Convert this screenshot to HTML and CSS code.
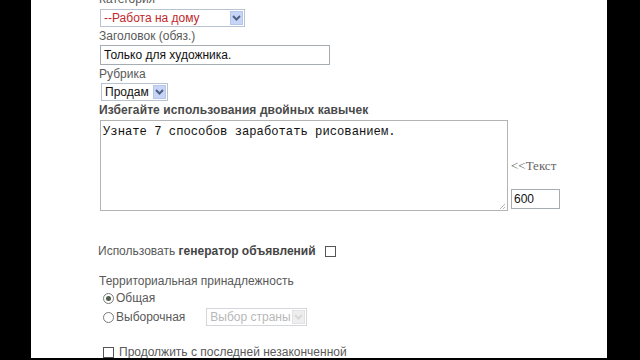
FILE: index.html
```html
<!DOCTYPE html>
<html lang="ru">
<head>
    <meta charset="UTF-8">
    <title>Подать объявление</title>
    <link rel="stylesheet" href="styles.css">
</head>
<body>
    <div class="screen">
        <div class="page">
            <form class="ad-form">
                <div class="label">Категория</div>
                <div class="select select-cat">
                    <span class="value red">--Работа на дому</span>
                    <span class="arrow"><svg width="9" height="6" viewBox="0 0 9 6"><path d="M1 1 L4.5 4.5 L8 1" fill="none" stroke="#4d6185" stroke-width="2"/></svg></span>
                </div>

                <div class="label">Заголовок (обяз.)</div>
                <div class="input input-title">Только для художника.</div>

                <div class="label">Рубрика</div>
                <div class="select select-rub">
                    <span class="value">Продам</span>
                    <span class="arrow"><svg width="9" height="6" viewBox="0 0 9 6"><path d="M1 1 L4.5 4.5 L8 1" fill="none" stroke="#4d6185" stroke-width="2"/></svg></span>
                </div>

                <div class="label bold">Избегайте использования двойных кавычек</div>
                <div class="text-row">
                    <div class="textarea">
                        Узнате 7 способов заработать рисованием.
                        <span class="grip"><svg width="8" height="8" viewBox="0 0 8 8"><path d="M7 2 L2 7 M7 5 L5 7" stroke="#b5b5b5" stroke-width="1"/></svg></span>
                    </div>
                    <div class="text-side">
                        <div class="counter-label">&lt;&lt;Текст</div>
                        <div class="input counter">600</div>
                    </div>
                </div>

                <div class="check-row generator">
                    <span>Использовать <b>генератор объявлений</b></span>
                    <span class="checkbox"></span>
                </div>

                <div class="label territory">Территориальная принадлежность</div>
                <div class="radio-row">
                    <span class="radio checked"></span>
                    <span>Общая</span>
                </div>
                <div class="radio-row">
                    <span class="radio"></span>
                    <span class="radio-text">Выборочная</span>
                    <div class="select select-country disabled">
                        <span class="value">Выбор страны</span>
                        <span class="arrow"><svg width="9" height="6" viewBox="0 0 9 6"><path d="M1 1 L4.5 4.5 L8 1" fill="none" stroke="#d8d8d8" stroke-width="2"/></svg></span>
                    </div>
                </div>

                <div class="check-row resume">
                    <span class="checkbox"></span>
                    <span>Продолжить с последней незаконченной</span>
                </div>
            </form>
        </div>
    </div>
</body>
</html>
```

FILE: styles.css
```css
body {
    margin: 0;
    background: #000;
    font-family: "Liberation Sans", Arial, sans-serif;
    font-size: 12px;
    color: #595959;
}

.screen {
    width: 640px;
    height: 360px;
    overflow: hidden;
}

.page {
    margin-left: 31px;
    width: 576px;
    height: 358px;
    background: #fff;
    overflow: hidden;
}

.ad-form {
    margin-top: -8px;
    padding-left: 67px;
}

.label {
    line-height: 14px;
    height: 14px;
    margin-left: 1px;
}

.label.bold {
    font-weight: bold;
    color: #4a4a4a;
    margin-top: 2px;
    height: 15px;
    letter-spacing: 0.1px;
}

.red {
    color: #c0282d;
}

/* fake selects */
.select {
    display: flex;
    align-items: center;
    box-sizing: border-box;
    height: 18px;
    border: 1px solid #b9c3cf;
    background: #fff;
    padding: 1px;
}

.select .value {
    flex: 1;
    padding-left: 2px;
    line-height: 14px;
    white-space: nowrap;
    overflow: hidden;
}

.select .arrow {
    flex-shrink: 0;
    width: 13px;
    height: 14px;
    box-sizing: border-box;
    border: 1px solid #b4c6ea;
    background: #c6d5f5;
    display: flex;
    align-items: center;
    justify-content: center;
}

.select-cat {
    width: 145px;
    margin: 3px 0 2px 2px;
}

.select-rub {
    width: 67px;
    margin: 2px 0 2px 3px;
    color: #111;
    font-size: 12px;
}

.select-country {
    width: 101px;
    margin-left: 21px;
}

.select.disabled {
    border-color: #d4d7dc;
    color: #b8b8b8;
}

.select.disabled .arrow {
    background: #eeeeee;
    border-color: #e2e2e2;
}

/* inputs */
.input {
    box-sizing: border-box;
    border: 1px solid #a5acb2;
    background: #fff;
    color: #111;
    padding: 0 3px;
    line-height: 18px;
    height: 20px;
}

.input-title {
    width: 230px;
    margin: 2px 0 2px 2px;
}

.text-row {
    display: flex;
    margin-top: 2px;
    margin-left: 2px;
}

.textarea {
    position: relative;
    box-sizing: border-box;
    width: 408px;
    height: 91px;
    border: 1px solid #b4b4b4;
    padding: 4px 2px;
    font-family: "Liberation Mono", "Courier New", monospace;
    font-size: 12.2px;
    color: #111;
}

.grip {
    position: absolute;
    right: 1px;
    bottom: 0;
    line-height: 0;
}

.text-side {
    margin-left: 3px;
    padding-top: 38px;
}

.counter-label {
    font-family: "Liberation Serif", "Times New Roman", serif;
    font-size: 13px;
    color: #666;
    line-height: 16px;
}

.counter {
    width: 49px;
    margin-top: 15px;
    padding: 0 2px;
}

/* checkboxes & radios */
.check-row {
    display: flex;
    align-items: center;
}

.checkbox {
    width: 11px;
    height: 11px;
    box-sizing: border-box;
    border: 1px solid #555;
    background: #fff;
}

.generator {
    margin-top: 33px;
    height: 14px;
}

.generator b {
    color: #444;
}

.generator .checkbox {
    margin-left: 9px;
}

.territory {
    margin-top: 16px;
}

.radio-row {
    display: flex;
    align-items: center;
    height: 18px;
    padding-left: 5px;
    margin-top: 1px;
}

.radio-row + .radio-row {
    height: 20px;
    margin-top: 0;
}

.radio {
    width: 11px;
    height: 11px;
    box-sizing: border-box;
    border: 1px solid #7a7a7a;
    border-radius: 50%;
    background: #fff;
    margin-right: 2px;
    display: flex;
    align-items: center;
    justify-content: center;
}

.radio.checked::after {
    content: "";
    width: 5px;
    height: 5px;
    border-radius: 50%;
    background: #4f5f4a;
}

.resume {
    margin-top: 18px;
    padding-left: 5px;
}

.resume .checkbox {
    margin-right: 5px;
}
```
